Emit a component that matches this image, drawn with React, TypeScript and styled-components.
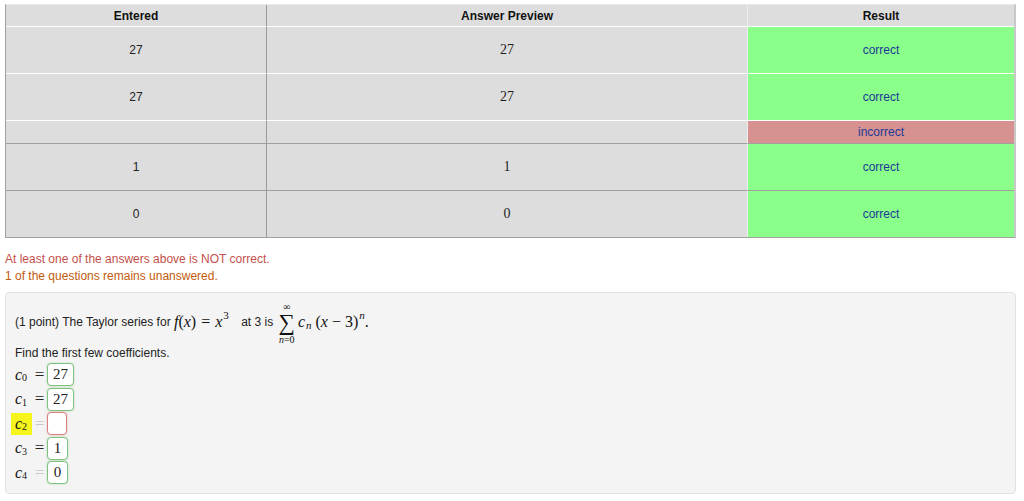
import React from 'react';
import styled, { createGlobalStyle } from 'styled-components';

const GlobalStyle = createGlobalStyle`
  body {
    margin: 0;
    background: #ffffff;
    font-family: "Liberation Sans", Arial, sans-serif;
    color: #222;
  }
`;

const Page = styled.div`
  width: 1024px;
  padding: 4px 8px 0 5px;
  box-sizing: border-box;
`;

const Results = styled.table`
  width: 1011px;
  table-layout: fixed;
  border-collapse: separate;
  border-spacing: 0;
  border-top: 1px solid #e8e8e8;
  border-left: 1px solid #a0a0a0;
  border-bottom: 1px solid #a0a0a0;
  border-right: 2px solid #c8c8c8;
  font-size: 12px;
`;

const Head = styled.th<{ $w: number; $col: number }>`
  width: ${(p) => p.$w}px;
  height: 21px;
  padding: 0;
  box-sizing: border-box;
  background: #dddddd;
  font-weight: bold;
  font-size: 12px;
  line-height: 14px;
  color: #111;
  text-align: center;
  border-left: ${(p) => (p.$col === 1 ? '1px solid #999' : p.$col === 2 ? '1px solid #eee' : 'none')};
`;

const Cell = styled.td<{ $col: number; $tall: boolean; $dark: boolean; $state?: 'ok' | 'bad' }>`
  height: ${(p) => (p.$tall ? 47 : 23)}px;
  padding: 0;
  box-sizing: border-box;
  text-align: center;
  vertical-align: middle;
  background: ${(p) => (p.$state === 'ok' ? '#8aff8a' : p.$state === 'bad' ? '#d69190' : '#dddddd')};
  color: ${(p) => (p.$state ? '#1c3a96' : '#222')};
  border-top: 1px solid ${(p) => (p.$dark ? '#a0a0a0' : '#ffffff')};
  border-left: ${(p) => (p.$col === 1 ? '1px solid #999' : p.$col === 2 ? '1px solid #eee' : 'none')};
  font-family: ${(p) =>
    p.$col === 1 ? '"Liberation Serif", "Times New Roman", serif' : '"Liberation Sans", Arial, sans-serif'};
  font-size: ${(p) => (p.$col === 1 ? 14 : 12)}px;
`;

const Messages = styled.div`
  margin: 13px 0 7px 0;
  font-size: 12px;
  line-height: 17px;
`;

const Msg = styled.div<{ $tone: 'red' | 'orange' }>`
  color: ${(p) => (p.$tone === 'red' ? '#c4504a' : '#c25a0c')};
`;

const Problem = styled.div`
  background: #f4f4f4;
  border: 1px solid #e2e2e2;
  border-radius: 4px;
  padding: 6px 9px 8px 9px;
  font-size: 12px;
  color: #222;
`;

const Statement = styled.div`
  display: flex;
  align-items: center;
  height: 46px;
  white-space: pre;
`;

const M = styled.span`
  font-family: "Liberation Serif", "Times New Roman", serif;
  font-size: 16px;
  font-style: italic;
  color: #111;
`;

const R = styled.span<{ $gap?: number }>`
  font-family: "Liberation Serif", "Times New Roman", serif;
  font-size: 16px;
  color: #111;
  margin: 0 ${(p) => p.$gap ?? 0}px;
`;

const Raise = styled.span<{ $italic?: boolean; $after?: number }>`
  font-family: "Liberation Serif", "Times New Roman", serif;
  font-size: 11px;
  font-style: ${(p) => (p.$italic ? 'italic' : 'normal')};
  color: #111;
  position: relative;
  top: -7px;
  margin-left: 1px;
  margin-right: ${(p) => p.$after ?? 0}px;
`;

const Lower = styled.span`
  font-family: "Liberation Serif", "Times New Roman", serif;
  font-size: 11px;
  font-style: italic;
  color: #111;
  position: relative;
  top: 3px;
  margin-left: 1px;
  margin-right: 4px;
`;

const Sum = styled.span`
  display: inline-flex;
  flex-direction: column;
  align-items: center;
  margin: 0 3px 0 2px;
  line-height: 1;
  font-family: "Liberation Serif", "Times New Roman", serif;
  position: relative;
  top: 1px;
`;

const Limit = styled.span`
  font-size: 10px;
  line-height: 13px;
  color: #111;
`;

const Sigma = styled.span`
  font-size: 23px;
  line-height: 20px;
  color: #111;
`;

const Line = styled.div`
  line-height: 14px;
  margin-top: 1px;
  margin-bottom: 3px;
`;

const Coefs = styled.div`
  display: flex;
  flex-direction: column;
  gap: 1px;
`;

const CoefRow = styled.div`
  display: flex;
  align-items: center;
  height: 23.5px;
`;

const Label = styled.span<{ $mark?: boolean }>`
  display: inline-flex;
  align-items: center;
  box-sizing: border-box;
  width: 21px;
  height: 22px;
  margin-left: -4px;
  padding-left: 4px;
  background: ${(p) => (p.$mark ? '#f5f51c' : 'transparent')};
`;

const Digit = styled.span`
  font-family: "Liberation Serif", "Times New Roman", serif;
  font-size: 10px;
  color: #111;
  position: relative;
  top: 3px;
`;

const Eq = styled.span<{ $faded?: boolean }>`
  font-family: "Liberation Serif", "Times New Roman", serif;
  font-size: 17px;
  color: ${(p) => (p.$faded ? '#c8c8c8' : '#222')};
  width: 15px;
  text-align: center;
`;

const Answer = styled.span<{ $w: number; $bad?: boolean }>`
  display: inline-flex;
  align-items: center;
  justify-content: center;
  box-sizing: border-box;
  width: ${(p) => p.$w}px;
  height: 23px;
  background: #fff;
  border: 1px solid ${(p) => (p.$bad ? '#d98080' : '#7fc27f')};
  border-radius: 4px;
  box-shadow: 0 0 2px ${(p) => (p.$bad ? 'rgba(210,80,80,0.4)' : 'rgba(80,170,80,0.4)')};
  font-family: "Liberation Serif", "Times New Roman", serif;
  font-size: 15px;
  color: #222;
`;

type Row = { entered: string; preview: string; result: 'correct' | 'incorrect'; tall: boolean; dark: boolean };

const rows: Row[] = [
  { entered: '27', preview: '27', result: 'correct', tall: true, dark: false },
  { entered: '27', preview: '27', result: 'correct', tall: true, dark: false },
  { entered: '', preview: '', result: 'incorrect', tall: false, dark: false },
  { entered: '1', preview: '1', result: 'correct', tall: true, dark: true },
  { entered: '0', preview: '0', result: 'correct', tall: true, dark: true },
];

const coefs = [
  { n: '0', v: '27', w: 27 },
  { n: '1', v: '27', w: 27 },
  { n: '2', v: '', w: 20, bad: true, mark: true, faded: true },
  { n: '3', v: '1', w: 21 },
  { n: '4', v: '0', w: 21, faded: true },
];

export default function App() {
  return (
    <Page>
      <GlobalStyle />
      <Results>
        <thead>
          <tr>
            <Head $w={260} $col={0}>Entered</Head>
            <Head $w={481} $col={1}>Answer Preview</Head>
            <Head $w={267} $col={2}>Result</Head>
          </tr>
        </thead>
        <tbody>
          {rows.map((r, i) => (
            <tr key={i}>
              <Cell $col={0} $tall={r.tall} $dark={r.dark}>{r.entered}</Cell>
              <Cell $col={1} $tall={r.tall} $dark={r.dark}>{r.preview}</Cell>
              <Cell $col={2} $tall={r.tall} $dark={r.dark} $state={r.result === 'correct' ? 'ok' : 'bad'}>
                {r.result}
              </Cell>
            </tr>
          ))}
        </tbody>
      </Results>

      <Messages>
        <Msg $tone="red">At least one of the answers above is NOT correct.</Msg>
        <Msg $tone="orange">1 of the questions remains unanswered.</Msg>
      </Messages>

      <Problem>
        <Statement>
          {'(1 point) The Taylor series for '}
          <M>f</M>
          <R>(</R>
          <M>x</M>
          <R>)</R>
          <R $gap={5}>=</R>
          <M>x</M>
          <Raise $after={9}>3</Raise>
          {' at 3 is '}
          <Sum>
            <Limit>∞</Limit>
            <Sigma>∑</Sigma>
            <Limit>
              <i>n</i>=0
            </Limit>
          </Sum>
          <M>c</M>
          <Lower>n</Lower>
          <R>(</R>
          <M>x</M>
          <R $gap={4}>−</R>
          <R>3)</R>
          <Raise $italic>n</Raise>
          <R>.</R>
        </Statement>
        <Line>Find the first few coefficients.</Line>
        <Coefs>
          {coefs.map((c) => (
            <CoefRow key={c.n}>
              <Label $mark={c.mark}>
                <M>c</M>
                <Digit>{c.n}</Digit>
              </Label>
              <Eq $faded={c.faded}>=</Eq>
              <Answer $w={c.w} $bad={c.bad}>{c.v}</Answer>
            </CoefRow>
          ))}
        </Coefs>
      </Problem>
    </Page>
  );
}
